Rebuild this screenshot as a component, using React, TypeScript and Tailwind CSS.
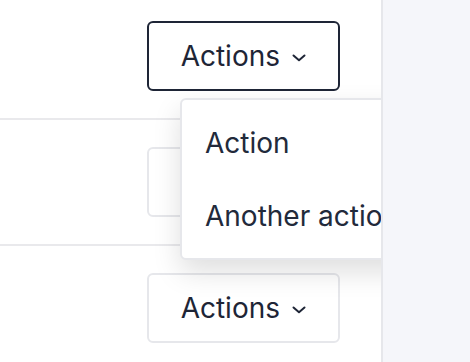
import React from "react";

const font = { fontFamily: "Inter, 'Noto Sans', sans-serif" };

function Chevron() {
  return (
    <svg width="14" height="8" viewBox="0 0 14 8" fill="none" className="mt-[4px]">
      <path d="M1.5 1.5L7 6.2L12.5 1.5" stroke="currentColor" strokeWidth="2" strokeLinecap="round" strokeLinejoin="round" />
    </svg>
  );
}

function ActionsButton({ active }: { active?: boolean }) {
  return (
    <button
      className={`flex h-[70px] items-center gap-3 rounded-md border-2 bg-white px-8 text-[28px] leading-none text-[#1e2536] ${
        active ? "border-[#1e2536]" : "border-[#e6e7eb]"
      }`}
      style={font}
    >
      <span>Actions</span>
      <Chevron />
    </button>
  );
}

export default function App() {
  const rows = [true, false, false];
  return (
    <div className="flex h-screen w-full overflow-hidden bg-[#f5f6fa]">
      <div className="relative h-full w-[383px] shrink-0 overflow-hidden border-r-2 border-[#e6e7eb] bg-white">
        <div className="-mt-[6px] flex flex-col">
          {rows.map((active, i) => (
            <div
              key={i}
              className={`flex justify-end pr-[41px] py-[27px] ${i < rows.length - 1 ? "border-b-2 border-[#e9e9ec]" : ""}`}
            >
              <ActionsButton active={active} />
            </div>
          ))}
        </div>

        {/* open menu of the first button */}
        <div
          className="absolute left-[180px] top-[98px] w-[260px] rounded-md border-2 border-[#e6e7eb] bg-white py-[6px] shadow-[0_12px_28px_rgba(0,0,0,0.13)]"
          style={font}
        >
          {["Action", "Another action"].map((label) => (
            <div key={label} className="flex h-[73px] items-center whitespace-nowrap px-[23px] text-[28px] leading-none text-[#222a3b]">
              {label}
            </div>
          ))}
        </div>
      </div>
      <div className="flex-1" />
    </div>
  );
}
